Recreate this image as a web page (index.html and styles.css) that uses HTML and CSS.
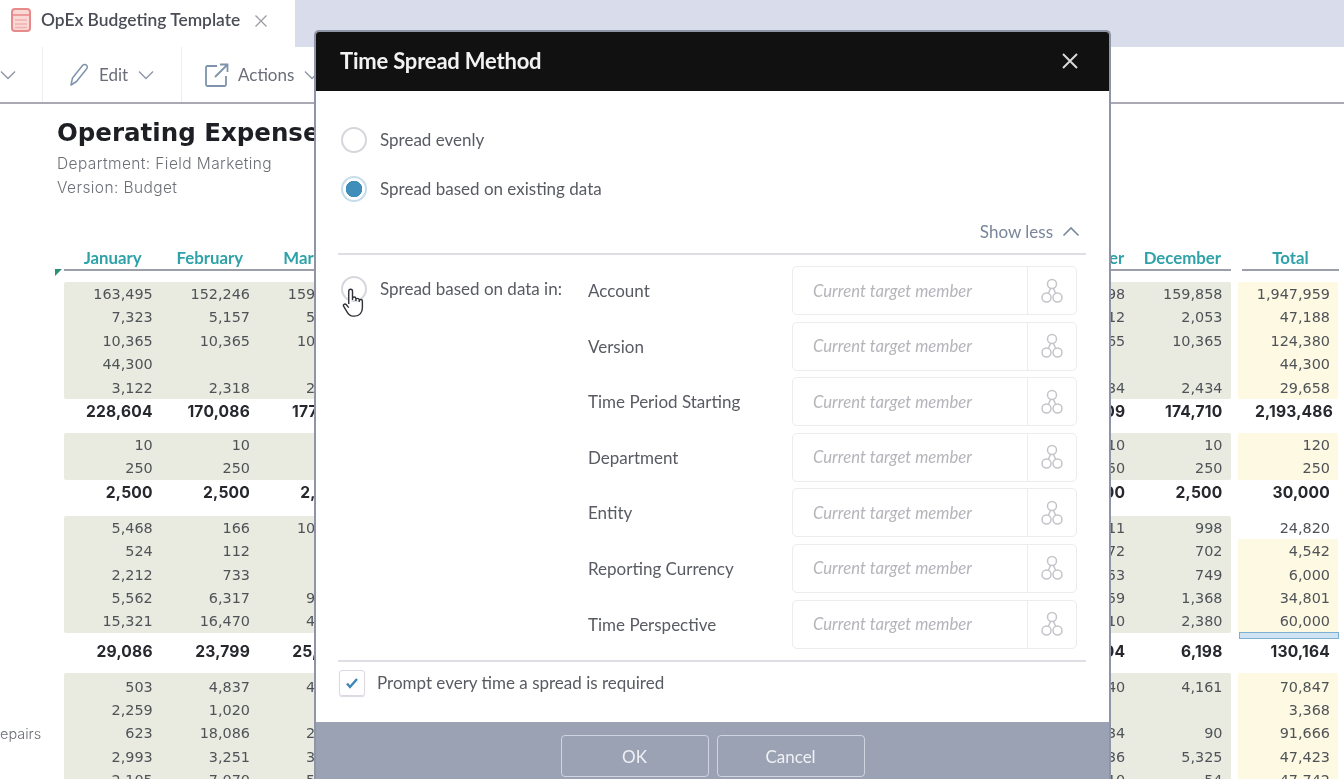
FILE: index.html
```html
<!DOCTYPE html>
<html lang="en">
<head>
<meta charset="utf-8">
<title>OpEx Budgeting Template</title>
<link rel="stylesheet" href="styles.css">
</head>
<body>
<div class="app">
  <header class="tabbar">
    <div class="tab">
      <svg class="tab-icon" viewBox="0 0 20 24"><rect x="1" y="1" width="18" height="22" rx="3" fill="#f9d8d5" stroke="#e8898a" stroke-width="2"/><path d="M1 7h18" stroke="#e8898a" stroke-width="1.5"/><path d="M4 12h12M4 16h12M4 19.500h12" stroke="#f2b0ae" stroke-width="1.500"/></svg>
      <span class="tab-title">OpEx Budgeting Template</span>
      <svg class="tab-close" viewBox="0 0 14 14"><path d="M1.500 1.500l11 11M12.500 1.500l-11 11" stroke="#9c9ca4" stroke-width="1.300" fill="none"/></svg>
    </div>
    <div class="tab-fill"></div>
  </header>
  <nav class="toolbar">
    <div class="tool tool-first"><svg class="chev" viewBox="0 0 16 10"><path d="M1 1.500l7 7 7-7" fill="none" stroke="#8f96a6" stroke-width="1.400"/></svg></div>
    <div class="tool tool-edit">
      <svg class="tool-icon" viewBox="0 0 20 24"><path d="M2 22l1.500-7L13.500 2.500c1.200-1.300 3-1.300 4 -.3s1 2.700-.2 4L7.500 18.500z" fill="none" stroke="#7f93ad" stroke-width="1.500" stroke-linejoin="round"/></svg>
      <span>Edit</span>
      <svg class="chev" viewBox="0 0 16 10"><path d="M1 1.500l7 7 7-7" fill="none" stroke="#8f96a6" stroke-width="1.400"/></svg>
    </div>
    <div class="tool tool-actions">
      <svg class="tool-icon wide" viewBox="0 0 24 24"><path d="M12 3H2.500A1.500 1.500 0 0 0 1 4.500v17A1.500 1.500 0 0 0 2.500 23h17a1.500 1.500 0 0 0 1.500-1.500V13" fill="none" stroke="#7f93ad" stroke-width="1.800"/><path d="M10 14L22 2M15 1.500h7.500V9" fill="none" stroke="#7f93ad" stroke-width="1.800"/></svg>
      <span>Actions</span>
      <svg class="chev" viewBox="0 0 16 10"><path d="M1 1.500l7 7 7-7" fill="none" stroke="#8f96a6" stroke-width="1.400"/></svg>
    </div>
  </nav>
  <main class="sheet">
    <h1 class="sheet-title">Operating Expenses</h1>
    <p class="sheet-meta">Department: Field Marketing</p>
    <p class="sheet-meta">Version: Budget</p>

    <div class="line head-row">
      <div class="gutter"><span class="marker"></span></div>
      <div class="months">
        <div>January</div><div>February</div><div>March</div><div class="skip"></div><div>November</div><div>December</div>
      </div>
      <div class="total-col">Total</div>
    </div>

    <div class="line data">
      <div class="gutter"></div>
      <div class="months green">
        <div>163,495</div><div>152,246</div><div>159,120</div><div class="skip"></div><div>161,398</div><div>159,858</div>
        <div>7,323</div><div>5,157</div><div>5,240</div><div class="skip"></div><div>4,112</div><div>2,053</div>
        <div>10,365</div><div>10,365</div><div>10,365</div><div class="skip"></div><div>10,365</div><div>10,365</div>
        <div>44,300</div><div></div><div></div><div class="skip"></div><div></div><div></div>
        <div>3,122</div><div>2,318</div><div>2,410</div><div class="skip"></div><div>2,434</div><div>2,434</div>
      </div>
      <div class="yellow">
        <div>1,947,959</div><div>47,188</div><div>124,380</div><div>44,300</div><div>29,658</div>
      </div>
    </div>
    <div class="line totals gap-a">
      <div class="gutter"></div>
      <div class="months"><div>228,604</div><div>170,086</div><div>177,135</div><div class="skip"></div><div>178,309</div><div>174,710</div></div>
      <div class="total-cell">2,193,486</div>
    </div>

    <div class="line data">
      <div class="gutter"></div>
      <div class="months green">
        <div>10</div><div>10</div><div>10</div><div class="skip"></div><div>10</div><div>10</div>
        <div>250</div><div>250</div><div>250</div><div class="skip"></div><div>250</div><div>250</div>
      </div>
      <div class="yellow"><div>120</div><div>250</div></div>
    </div>
    <div class="line totals gap-b">
      <div class="gutter"></div>
      <div class="months"><div>2,500</div><div>2,500</div><div>2,500</div><div class="skip"></div><div>2,500</div><div>2,500</div></div>
      <div class="total-cell">30,000</div>
    </div>

    <div class="line data selected">
      <div class="gutter"></div>
      <div class="months green">
        <div>5,468</div><div>166</div><div>10,240</div><div class="skip"></div><div>1,011</div><div>998</div>
        <div>524</div><div>112</div><div>310</div><div class="skip"></div><div>472</div><div>702</div>
        <div>2,212</div><div>733</div><div>420</div><div class="skip"></div><div>653</div><div>749</div>
        <div>5,562</div><div>6,317</div><div>9,004</div><div class="skip"></div><div>2,459</div><div>1,368</div>
        <div>15,321</div><div>16,470</div><div>4,820</div><div class="skip"></div><div>5,110</div><div>2,380</div>
      </div>
      <div class="yellow first-plain">
        <div>24,820</div><div>4,542</div><div>6,000</div><div>34,801</div><div>60,000</div>
      </div>
      <span class="cell-cursor"></span>
    </div>
    <div class="line totals gap-c">
      <div class="gutter"></div>
      <div class="months"><div>29,086</div><div>23,799</div><div>25,794</div><div class="skip"></div><div>9,704</div><div>6,198</div></div>
      <div class="total-cell">130,164</div>
    </div>

    <div class="line data last">
      <div class="gutter"><div></div><div></div><div class="row-label">epairs</div></div>
      <div class="months green">
        <div>503</div><div>4,837</div><div>4,100</div><div class="skip"></div><div>3,140</div><div>4,161</div>
        <div>2,259</div><div>1,020</div><div>310</div><div class="skip"></div><div></div><div></div>
        <div>623</div><div>18,086</div><div>2,210</div><div class="skip"></div><div>134</div><div>90</div>
        <div>2,993</div><div>3,251</div><div>3,610</div><div class="skip"></div><div>4,036</div><div>5,325</div>
        <div>2,105</div><div>7,070</div><div>5,200</div><div class="skip"></div><div>110</div><div>54</div>
      </div>
      <div class="yellow"><div>70,847</div><div>3,368</div><div>91,666</div><div>47,423</div><div>47,742</div></div>
    </div>
  </main>
</div>

<section class="modal">
  <div class="modal-head">
    <h2>Time Spread Method</h2>
    <svg class="modal-close" viewBox="0 0 18 18"><path d="M2 2l14 14M16 2L2 16" stroke="#d8d8d8" stroke-width="2" fill="none"/></svg>
  </div>
  <div class="modal-body">
    <div class="option"><span class="radio"></span><span>Spread evenly</span></div>
    <div class="option second"><span class="radio on"></span><span>Spread based on existing data</span></div>
    <div class="show-less"><span>Show less</span><svg viewBox="0 0 18 11"><path d="M1.500 9.500L9 2l7.500 7.500" fill="none" stroke="#7e8aa0" stroke-width="1.700"/></svg></div>
    <div class="rule"></div>
    <div class="advanced">
      <div class="option based">
        <span class="radio"></span><span>Spread based on data in:</span>
        <svg class="hand" viewBox="0 0 24 34"><path d="M8 19V5.500a2 2 0 0 1 4 0V15m0-1.500a1.800 1.800 0 0 1 3.600 0V16m0-1.500a1.800 1.800 0 0 1 3.500 0V17m0-1a1.700 1.700 0 0 1 3.400 0v7c0 5-3 9-8 9h-2c-3 0-4.500-1.500-6-4l-4-6.500c-1-1.800 1.500-3.200 3-1.500L8 23" fill="#fff" stroke="#2f3238" stroke-width="1.500" stroke-linejoin="round"/></svg>
      </div>
      <div class="fields">
        <label class="field-name">Account</label>
        <div class="member"><span class="member-text">Current target member</span><span class="member-btn"><svg viewBox="0 0 24 26"><use href="#tree"/></svg></span></div>
        <label class="field-name">Version</label>
        <div class="member"><span class="member-text">Current target member</span><span class="member-btn"><svg viewBox="0 0 24 26"><use href="#tree"/></svg></span></div>
        <label class="field-name">Time Period Starting</label>
        <div class="member"><span class="member-text">Current target member</span><span class="member-btn"><svg viewBox="0 0 24 26"><use href="#tree"/></svg></span></div>
        <label class="field-name">Department</label>
        <div class="member"><span class="member-text">Current target member</span><span class="member-btn"><svg viewBox="0 0 24 26"><use href="#tree"/></svg></span></div>
        <label class="field-name">Entity</label>
        <div class="member"><span class="member-text">Current target member</span><span class="member-btn"><svg viewBox="0 0 24 26"><use href="#tree"/></svg></span></div>
        <label class="field-name">Reporting Currency</label>
        <div class="member"><span class="member-text">Current target member</span><span class="member-btn"><svg viewBox="0 0 24 26"><use href="#tree"/></svg></span></div>
        <label class="field-name">Time Perspective</label>
        <div class="member"><span class="member-text">Current target member</span><span class="member-btn"><svg viewBox="0 0 24 26"><use href="#tree"/></svg></span></div>
      </div>
    </div>
    <div class="rule rule-low"></div>
    <div class="prompt">
      <span class="check"><svg viewBox="0 0 14 12"><path d="M2 6.500l3 3.500 7-8" fill="none" stroke="#3e87b4" stroke-width="2.400"/></svg></span>
      <span>Prompt every time a spread is required</span>
    </div>
  </div>
  <div class="modal-foot">
    <button class="btn">OK</button>
    <button class="btn">Cancel</button>
  </div>
</section>

<svg class="defs" width="0" height="0">
  <defs>
    <g id="tree" fill="none" stroke="#c4c4ca" stroke-width="1.500">
      <circle cx="12" cy="6" r="4.500"/><circle cx="6.500" cy="19.500" r="4.500"/><circle cx="17.500" cy="19.500" r="4.500"/>
      <path d="M10.500 10.500l-2 4.500M13.500 10.500l2 4.500"/>
    </g>
  </defs>
</svg>
</body>
</html>
```
FILE: styles.css
```css
* { box-sizing: border-box; }
html, body { margin: 0; height: 100%; overflow: hidden; background: #fff; }
body { font-family: "Lato", "Liberation Sans", sans-serif; color: #555; position: relative; filter: blur(0.45px); }

.defs { position: absolute; }

/* top tab strip */
.tabbar { display: flex; height: 47px; }
.tab { width: 295px; display: flex; align-items: flex-start; padding: 8px 0 0 11px; }
.tab-icon { width: 20px; height: 24px; flex: none; }
.tab-title { margin-left: 10px; font-size: 17.400px; font-weight: 600; color: #4a4d55; line-height: 24px; white-space: nowrap; }
.tab-close { width: 14px; height: 14px; margin: 6px 0 0 14px; flex: none; }
.tab-fill { flex: 1; background: #d9dcea; }

/* toolbar */
.toolbar { display: flex; height: 57px; border-bottom: 2px solid #a8a9b2; }
.tool { display: flex; align-items: center; height: 55px; border-right: 1px solid #eeeef2; font-size: 17px; color: #6a6e78; }
.tool-first { width: 43px; }
.tool-edit { width: 139px; padding-left: 26px; }
.tool-actions { padding-left: 23px; border-right: 0; }
.tool-icon { width: 20px; height: 24px; flex: none; }
.tool-icon.wide { width: 24px; }
.tool span { margin-left: 10px; }
.tool-actions span { margin-left: 9px; }
.chev { width: 16px; height: 10px; flex: none; }
.tool-edit .chev, .tool-actions .chev { margin-left: 10px; }

/* sheet */
.sheet { padding-top: 14px; }
.sheet-title { margin: 0 0 0 57px; font-family: "DejaVu Sans", sans-serif; font-size: 24.500px; font-weight: 700; line-height: 30px; color: #1d1f24; white-space: nowrap; }
.sheet-meta { margin: 0 0 0 57px; font-family: "Inter", sans-serif; font-size: 15.500px; font-weight: 300; line-height: 24px; color: #6c6f76; height: 24px; letter-spacing: 0.4px; }
.sheet-title + .sheet-meta { margin-top: 4px; }
.sheet-meta + .sheet-meta { margin-bottom: 47px; }

.line { display: flex; position: relative; }
.gutter { width: 64px; flex: none; }
.months { width: 1167px; flex: none; display: grid; grid-template-columns: repeat(3, 97.250px) 1fr repeat(2, 97.250px); font-family: "DejaVu Sans", sans-serif; font-size: 14.400px; color: #4f5358; text-align: right; }
.months > div { padding-right: 8.500px; }
.months .skip { padding: 0; }

.head-row { height: 24px; }
.marker { position: absolute; left: 55px; top: 22px; width: 0; height: 0; border-top: 7px solid #2c8f77; border-right: 7px solid transparent; }
.head-row .months { font-family: "Lato", sans-serif; font-weight: 700; font-size: 16.800px; color: #2ea2a8; border-bottom: 2px solid #9c9eaa; height: 24px; line-height: 22px; text-align: center; white-space: nowrap; }
.head-row .months > div { padding-right: 0; }
.total-col { width: 97px; margin-left: 11px; height: 24px; line-height: 22px; text-align: center; font-weight: 700; font-size: 16.800px; color: #2ea2a8; border-bottom: 2px solid #9c9eaa; }

.head-row + .data { margin-top: 11px; }
.data .months { grid-auto-rows: 23.400px; line-height: 25.400px; }
.green { background: #e9ebe0; border-radius: 2px; }
.yellow { width: 100px; margin-left: 7px; flex: none; background: #fdf9e2; font-family: "DejaVu Sans", sans-serif; font-size: 14.400px; line-height: 25.400px; color: #4f5358; text-align: right; padding-right: 8px; }
.yellow > div { height: 23.400px; }
.first-plain { background: linear-gradient(#fff 23.400px, #fdf9e2 23.400px); }
.last .months, .last .yellow { padding-top: 2px; }
.last .gutter { padding-top: 2px; }
.last .gutter > div { height: 23.400px; }
.row-label { font-family: "Inter", sans-serif; font-size: 14.500px; font-weight: 300; line-height: 25.400px; color: #6c6f76; }

.cell-cursor { position: absolute; left: 1239px; bottom: -6px; width: 100px; height: 7px; border: 1px solid #7eaed0; background: #cfe4f2; }

.totals .months, .total-cell { font-family: "Inter", sans-serif; font-weight: 700; font-size: 15.600px; color: #26282d; line-height: 23px; letter-spacing: 0.2px; }
.total-cell { width: 100px; margin-left: 7px; flex: none; text-align: right; padding-right: 5px; white-space: nowrap; }
.gap-a { margin-bottom: 10px; padding-top: 1px; }
.gap-b { margin-bottom: 12px; padding-top: 1px; }
.gap-c { margin-bottom: 10px; padding-top: 7px; }
.gap-b .total-cell, .gap-c .total-cell { padding-right: 8px; }

/* dialog */
.modal { position: absolute; left: 314px; top: 30px; width: 797px; height: 790px; background: #fff; border: 2px solid #8e95a6; border-bottom: 0; border-radius: 5px 5px 0 0; display: flex; flex-direction: column; }
.modal-head { height: 59px; flex: none; background: #111; display: flex; align-items: center; justify-content: space-between; padding: 0 30px 2px 24px; border-radius: 3px 3px 0 0; }
.modal-head h2 { margin: 0; font-size: 22px; font-weight: 700; color: #f2f2f2; letter-spacing: -0.2px; }
.modal-close { width: 18px; height: 18px; }
.modal-body { height: 631px; flex: none; padding: 36px 23px 0 22px; font-size: 17px; color: #585b62; }
.option { display: flex; align-items: center; gap: 13px; margin-left: 3px; line-height: 26px; position: relative; }
.second { margin-top: 23px; }
.radio { width: 26px; height: 26px; flex: none; border: 2px solid #d6d6dc; border-radius: 50%; background: #fff; }
.radio.on { border: 2px solid #c5dcea; background: radial-gradient(circle, #3f8fba 0 8px, #fff 8.500px); }
.show-less { display: flex; justify-content: flex-end; align-items: center; gap: 9px; margin: 19px 0 0; height: 20px; padding-right: 6px; color: #79859a; }
.show-less svg { width: 18px; height: 11px; }
.rule { height: 2px; background: #dfdee4; margin-top: 12px; }
.rule-low { margin-top: 11px; }
.advanced { display: flex; margin-top: 11px; align-items: flex-start; }
.based { width: 247px; margin-top: 10px; flex: none; white-space: nowrap; }
.hand { position: absolute; left: 0; top: 10px; width: 23px; height: 32px; }
.fields { display: grid; grid-template-columns: 204px 285px; grid-auto-rows: 49px; row-gap: 6.600px; align-items: center; }
.field-name { color: #585b62; }
.member { height: 49px; display: flex; align-items: center; border: 1px solid #efeaf0; border-radius: 5px; }
.member-text { flex: 1; padding-left: 20px; font-style: italic; font-size: 16.700px; color: #b4b4ba; white-space: nowrap; }
.member-btn { width: 49px; height: 47px; flex: none; border-left: 1px solid #efeaf0; display: flex; align-items: center; justify-content: center; }
.member-btn svg { width: 24px; height: 26px; }
.prompt { display: flex; align-items: center; gap: 12px; margin: 8px 0 0 1px; }
.check { width: 26px; height: 26px; border: 1px solid #ddd8e2; border-radius: 3px; display: flex; align-items: center; justify-content: center; box-shadow: 0 1px 1px #ddd8e2; }
.check svg { width: 14px; height: 12px; }
.modal-foot { flex: 1; background: #9aa2b4; display: flex; justify-content: center; align-items: flex-start; gap: 8px; padding: 13px 0 0; }
.btn { width: 148px; height: 42px; background: transparent; border: 1.500px solid #cfd4e0; border-radius: 4px; color: #f0f1f5; font-family: "Lato", sans-serif; font-size: 17px; }
```
